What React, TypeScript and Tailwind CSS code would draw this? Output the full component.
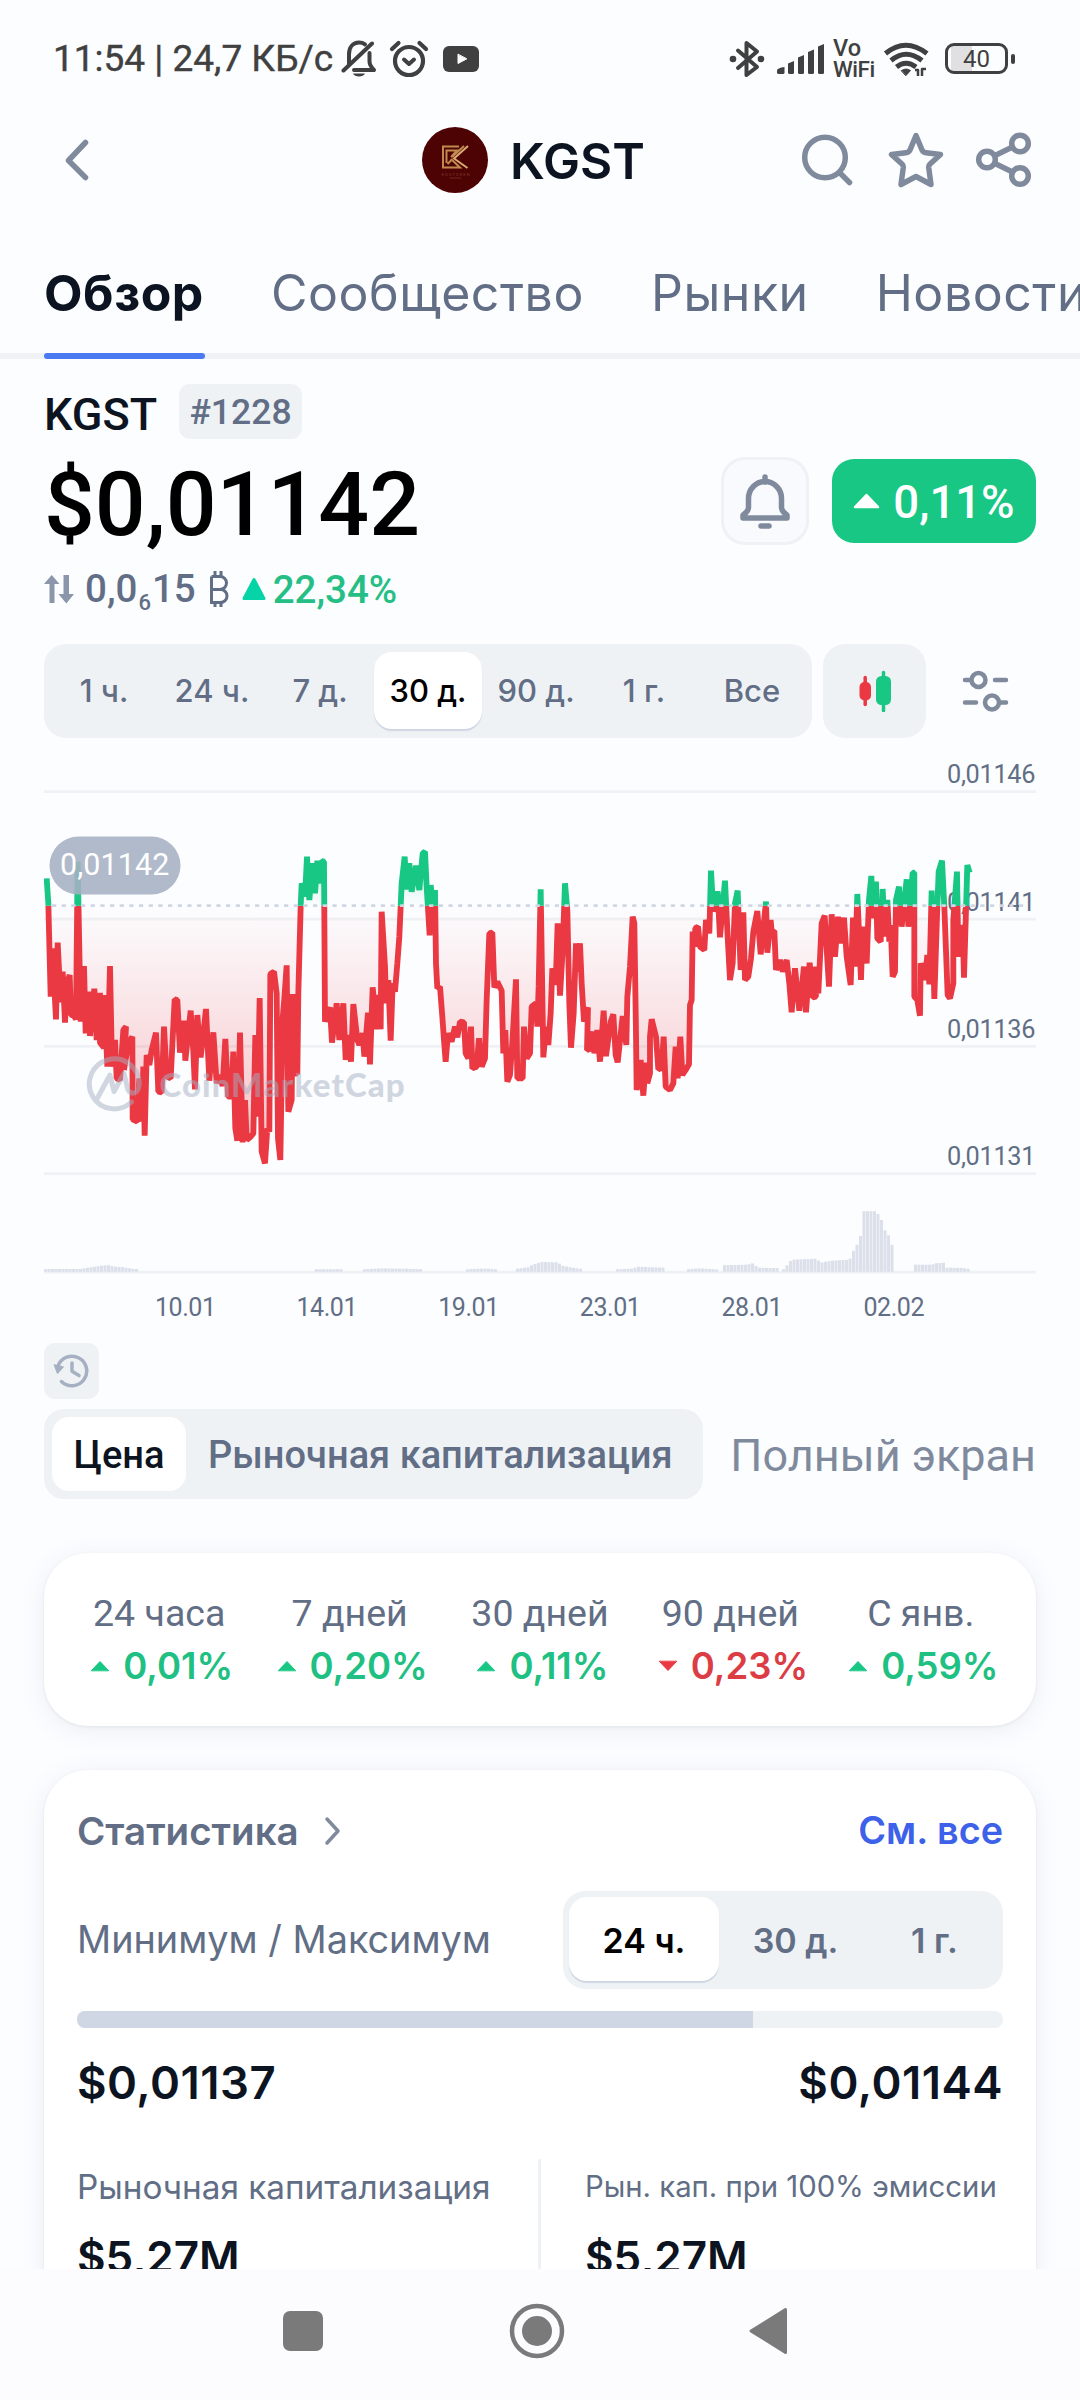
import type { ReactNode } from 'react'

const PERIODS = ['1 ч.', '24 ч.', '7 д.', '30 д.', '90 д.', '1 г.', 'Все']
const ACTIVE_PERIOD = '30 д.'

interface Change {
  readonly label: string
  readonly value: string
  readonly up: boolean
}

const CHANGES: readonly Change[] = [
  { label: '24 часа', value: '0,01%', up: true },
  { label: '7 дней', value: '0,20%', up: true },
  { label: '30 дней', value: '0,11%', up: true },
  { label: '90 дней', value: '0,23%', up: false },
  { label: 'С янв.', value: '0,59%', up: true },
]

const Y_LABELS = [
  { text: '0,01146', y: 783, line: 791.7 },
  { text: '0,01141', y: 911, line: 919 },
  { text: '0,01136', y: 1038, line: 1046.3 },
  { text: '0,01131', y: 1165, line: 1173.7 },
]

const X_LABELS = [
  { text: '10.01', x: 185.5 },
  { text: '14.01', x: 327 },
  { text: '19.01', x: 468.7 },
  { text: '23.01', x: 610.3 },
  { text: '28.01', x: 752 },
  { text: '02.02', x: 894 },
]

// Price series, in thirds of a pixel; y starts 750px from the top of the screen.
const PRICE_LINE =
  '140,385 145,460 152,740 157,595 168,808 173,578 182,757 188,665 195,818 201,700 209,675 213,795 222,797 228,808 233,335 242,815 ' +
  '252,648 257,850 265,725 270,858 283,716 290,870 300,728 300,878 312,893 313,735 322,950 330,648 336,950 345,870 350,985 360,990 ' +
  '370,840 378,830 372,960 385,880 397,860 398,1108 412,1115 418,985 425,1115 430,950 434,1157 440,915 448,945 455,900 468,848 475,1025 ' +
  '485,1027 492,830 500,980 512,985 524,748 532,750 540,908 552,812 556,932 572,782 580,905 585,1018 592,795 602,922 608,870 618,777 ' +
  '628,992 640,847 650,1000 658,975 668,1008 676,867 684,1040 694,1040 700,905 706,1135 712,1172 720,848 728,1177 735,1050 740,1170 ' +
  '752,1160 760,1150 766,855 772,1100 779,744 785,1205 795,1240 802,1135 808,1145 811,672 822,665 830,730 834,1165 841,1230 848,805 ' +
  '852,760 860,646 865,1085 875,1050 878,732 885,970 892,972 895,730 902,470 905,400 915,440 921,320 928,450 937,340 945,430 952,332 ' +
  '960,400 965,333 972,335 975,815 990,772 996,878 1010,760 1018,870 1030,760 1037,930 1045,855 1053,935 1060,762 1072,870 1078,885 ' +
  '1088,850 1093,920 1104,788 1110,943 1118,712 1130,838 1135,735 1142,838 1145,485 1155,650 1158,760 1165,690 1172,872 1178,700 ' +
  '1185,725 1192,640 1198,560 1202,470 1205,400 1214,320 1220,418 1228,340 1235,425 1248,347 1258,420 1268,310 1275,305 1280,410 ' +
  '1289,556 1292,405 1300,470 1305,420 1308,640 1312,715 1320,710 1327,800 1332,870 1337,935 1344,850 1355,875 1365,830 1372,862 ' +
  '1380,815 1392,817 1397,910 1405,925 1413,830 1417,955 1430,950 1437,865 1445,950 1455,925 1460,750 1468,550 1477,548 1483,712 ' +
  '1492,695 1505,722 1510,910 1516,840 1522,995 1530,975 1537,880 1548,688 1552,985 1568,985 1572,830 1580,925 1590,910 1595,770 ' +
  '1608,760 1612,830 1616,710 1622,418 1630,922 1638,830 1645,885 1652,790 1657,655 1667,705 1673,520 1680,737 1688,600 1695,400 ' +
  '1702,480 1708,760 1713,893 1721,790 1728,580 1733,665 1740,580 1745,700 1752,815 1764,772 1761,900 1770,897 1780,845 1783,910 ' +
  '1792,840 1800,935 1811,782 1818,918 1832,815 1840,793 1847,915 1853,937 1868,798 1879,885 1882,740 1890,650 1898,500 1903,520 ' +
  '1908,850 1910,1020 1922,930 1930,1037 1937,938 1942,1000 1950,970 1950,860 1955,808 1968,860 1975,958 1985,955 1991,860 1997,1010 ' +
  '2010,1020 2020,1000 2027,890 2033,985 2041,860 2047,975 2057,960 2067,943 2070,765 2075,750 2078,545 2083,590 2086,535 2094,530 ' +
  '2100,590 2113,600 2118,510 2128,550 2133,362 2140,485 2153,424 2160,562 2175,392 2183,560 2190,690 2198,640 2205,460 2213,422 ' +
  '2222,660 2230,487 2235,690 2245,680 2253,625 2260,545 2272,483 2282,613 2298,455 2302,608 2312,510 2315,545 2323,543 2328,660 ' +
  '2340,630 2348,665 2360,630 2368,700 2375,787 2385,655 2398,782 2412,650 2418,787 2429,638 2438,742 2448,740 2444,650 2455,730 ' +
  '2465,520 2474,497 2487,710 2495,493 2505,620 2514,500 2520,580 2532,503 2540,620 2552,705 2559,503 2565,650 2572,432 2583,690 ' +
  '2588,530 2600,640 2607,450 2614,378 2620,505 2628,395 2632,565 2642,575 2648,417 2655,560 2662,450 2668,575 2672,525 2678,680 ' +
  '2685,665 2688,450 2697,410 2705,530 2720,388 2725,530 2738,368 2743,368 2743,740 2752,750 2760,797 2762,640 2775,690 2782,615 ' +
  '2788,703 2795,422 2803,747 2812,470 2816,365 2826,332 2833,470 2843,735 2850,745 2860,700 2860,510 2871,365 2875,620 2888,525 ' +
  '2892,683 2902,345 2909,368'

// Volume profile: [x, height] runs in px, interpolated between neighbours.
const VOLUME: readonly (readonly (readonly [number, number])[])[] = [
  [[44, 2.7], [78, 2.7], [90, 4.5], [100, 6], [107, 6.5], [113, 5], [122, 4.5], [130, 3], [138, 2.5]],
  [[315, 2.5], [342, 2.5]],
  [[363, 2.5], [380, 3.3], [400, 3], [422, 2.5]],
  [[466, 2.5], [483, 3.2], [496, 2.3]],
  [[516, 3], [527, 4.5], [531, 7], [541, 10], [548, 9.5], [556, 9.5], [561, 6], [571, 4], [581, 2.7]],
  [[616, 2.5], [630, 3], [637, 5], [648, 4.5], [663, 4]],
  [[687, 2.5], [697, 3.3], [712, 2.5], [717, 2]],
  [[723, 6.5], [745, 7], [752, 8.5], [756, 4], [779, 3.5]],
  [[782, 2.5], [786, 7], [790, 12], [815, 13], [819, 9], [830, 11], [848, 12], [853, 23], [858, 31], [861, 45], [862, 60.5], [874, 60.5], [879, 55], [883, 42], [888, 35], [892, 22]],
  [[914, 7], [930, 7], [935, 8.5], [943, 9], [945, 4], [960, 3.8], [969, 2.5]],
]

function volumeBars(): { x: number; h: number }[] {
  const bars: { x: number; h: number }[] = []
  for (const run of VOLUME) {
    const end = run[run.length - 1][0]
    for (let x = run[0][0]; x < end; x += 3.5) {
      const i = Math.max(0, run.findIndex((p) => p[0] > x) - 1)
      const [x0, h0] = run[i]
      const [x1, h1] = run[i + 1]
      bars.push({ x, h: h0 + ((h1 - h0) * (x - x0)) / (x1 - x0) })
    }
  }
  return bars
}

interface SvgProps {
  readonly w: number
  readonly h: number
  readonly className?: string
  readonly children: ReactNode
}

function Svg({ w, h, className, children }: SvgProps) {
  return (
    <svg
      width={w}
      height={h}
      viewBox={`0 0 ${w} ${h}`}
      fill="none"
      strokeLinecap="round"
      strokeLinejoin="round"
      className={`block shrink-0 ${className ?? ''}`}
      aria-hidden="true"
    >
      {children}
    </svg>
  )
}

function StatusBar() {
  return (
    <div className="flex h-[117px] shrink-0 items-center pr-[65px] pl-[53px] text-[#404040]">
      <span className="w-[288px] font-[Roboto] text-[37px] leading-none whitespace-nowrap [-webkit-text-stroke:0.4px_#404040]">
        11:54 | 24,7 КБ/с
      </span>
      <Svg w={36} h={38}>
        <g stroke="#404040" strokeWidth="4">
          <path d="M8 24V14.5C8 7 12 2.5 18 2.5c2.5 0 4.5.7 6 1.8" />
          <path d="M2.5 30.500 31 3.5" />
          <path d="M28.5 13v8.500c0 4 2 6 4.500 8.500H13" />
        </g>
        <path d="M12 33.500h12c-1.500 4-10.500 4-12 0z" fill="#404040" />
      </Svg>
      <Svg w={40} h={38} className="ml-[12px]">
        <g stroke="#404040">
          <circle cx="20" cy="21" r="14" strokeWidth="4.2" />
          <path d="M15 19.500l5 4.500 5-4.500" strokeWidth="4" />
          <path d="M3 9 9.500 3M37 9 30.500 3" strokeWidth="4.2" />
        </g>
      </Svg>
      <Svg w={38} h={28} className="ml-[13px]">
        <rect x="1" y="1" width="36" height="26" rx="6" fill="#404040" />
        <path d="M16 9.500v9l8.500-4.500z" fill="#fcfdff" stroke="#fcfdff" />
      </Svg>

      <div className="ml-auto flex items-center">
        <Svg w={36} h={40}>
          <path d="M9 11.500 28 28 17.500 36V4L28 12.500 9 29" stroke="#404040" strokeWidth="4" />
          <circle cx="4" cy="20" r="3.3" fill="#404040" />
          <circle cx="32" cy="20" r="3.3" fill="#404040" />
        </Svg>
        <Svg w={48} h={32} className="ml-[12px]">
          <g fill="#404040">
            <path d="M0 27.500Q0 25 7.500 24v5.500q0 1.500-1.500 1.500h-4Q0 31 0 29.500z" />
            <path d="M11 20.500l6-2.500v11.500q0 1.500-1.500 1.500h-3q-1.500 0-1.500-1.500z" />
            <path d="M21 14.500l6-2.500v17.500q0 1.500-1.500 1.500h-3q-1.500 0-1.500-1.500z" />
            <path d="M31 9l6-2.500v23q0 1.500-1.500 1.500h-3q-1.500 0-1.500-1.500z" />
            <path d="M41 3.500 47 1v28.500q0 1.500-1.500 1.500h-3q-1.500 0-1.500-1.500z" />
          </g>
        </Svg>
        <div className="ml-[8px] flex w-[46px] flex-col font-[Roboto] text-[23.5px] leading-[21px] font-medium">
          <span>Vo</span>
          <span className="text-[22.5px] tracking-[-0.5px]">WiFi</span>
        </div>
        <Svg w={48} h={36} className="ml-[4px]">
          <g stroke="#404040" strokeWidth="5" strokeLinecap="butt">
            <path d="M2.5 12.500q20-16.500 41.500 0" />
            <path d="M8 19.500q15-12.500 31 0" />
            <path d="M13.500 26q9.500-7.500 19.500 0" />
          </g>
          <path d="M18.500 29.500q4.500-3 9 0l-4.500 5z" fill="#404040" stroke="#404040" />
          <path d="M32 29h3v6M39 35v-7h4" stroke="#404040" strokeWidth="2.5" strokeLinecap="butt" />
        </Svg>
        <div className="ml-[14px] flex h-[31px] w-[63px] items-center justify-center rounded-[9px] border-[3px] border-[#404040] bg-[linear-gradient(90deg,transparent_3px,#e0e0e2_3px,#e0e0e2_24px,transparent_24px)] pt-px font-[Roboto] text-[24px] leading-none">
          40
        </div>
        <div className="ml-[3px] h-[10px] w-[4px] rounded-full bg-[#404040]" />
      </div>
    </div>
  )
}

function TokenLogo() {
  return (
    <Svg w={66} h={66}>
      <circle cx="33" cy="33" r="33" fill="#4d0203" />
      <g stroke="#c08a4e" strokeWidth="2" strokeLinecap="butt" strokeLinejoin="miter">
        <path d="M37 19.500H21V40.500H38L29 32" />
        <path d="M24.500 36V23.500H35L29 30M25.500 37l4-4" />
        <path d="M46 19 32 31.500 45.500 41" stroke="#d8ab74" />
        <path d="M42 19 30 30" />
      </g>
      <text
        x="33.5"
        y="48.5"
        textAnchor="middle"
        fontFamily="Roboto, sans-serif"
        fontSize="4"
        textLength="28"
        fill="#7d3a2c"
      >
        KGSTOKEN
      </text>
      <path d="M28 51h11" stroke="#6b2a20" />
    </Svg>
  )
}

function Header() {
  return (
    <header className="flex h-[86px] shrink-0 items-center pl-[64px]">
      <Svg w={26} h={42} className="mr-[332px]">
        <path d="M21.500 3.500 4.500 21.500 21.500 38.500" stroke="#808a9d" strokeWidth="5.5" />
      </Svg>
      <TokenLogo />
      <h1 className="mt-[3px] ml-[22px] w-[291px] text-[49.5px] leading-none font-semibold text-[#0d1421]">
        KGST
      </h1>
      <Svg w={52} h={52}>
        <g stroke="#808a9d" strokeWidth="5.5">
          <circle cx="24" cy="23.5" r="20.3" />
          <path d="M39 39l9.500 9.500" />
        </g>
      </Svg>
      <Svg w={56} h={58} className="ml-[35px]">
        <path
          d="M28 4.500 34 19q1.300 2.500 4 2.700l14.500 1.800L42 33q-1.500 1.500-1.300 3.500L43 53.500 28 45.500 13 53.500 15.300 36.500q.2-2-1.300-3.500L3.500 23.500 18 21.700q2.700-.2 4-2.700z"
          stroke="#808a9d"
          strokeWidth="5.5"
        />
      </Svg>
      <Svg w={58} h={58} className="ml-[30px]">
        <g stroke="#808a9d" strokeWidth="5.5">
          <circle cx="13" cy="28.5" r="8.3" />
          <circle cx="46" cy="12.5" r="8.3" />
          <circle cx="46" cy="45" r="8.3" />
          <path d="M21 24.500 38.500 16M21 32.500 38.500 41" />
        </g>
      </Svg>
    </header>
  )
}

function Tabs() {
  return (
    <div className="flex shrink-0 flex-col">
      <nav className="flex h-[150px] gap-[67px] overflow-hidden pt-[60px] pl-[44px] text-[50px] leading-[60px] tracking-[0.55px] whitespace-nowrap text-[#616e85]">
        <span className="font-bold text-[#0d1421]">Обзор</span>
        <span>Сообщество</span>
        <span>Рынки</span>
        <span>Новости</span>
      </nav>
      <div className="h-[6px] bg-[#eff2f5] pl-[44px]">
        <div className="h-full w-[161px] rounded-full bg-[#4a7af2]" />
      </div>
    </div>
  )
}

function PriceSummary() {
  return (
    <section className="flex flex-col px-[44px] pt-[25px] font-[Roboto]">
      <div className="flex h-[55px] items-center">
        <span className="mt-[5px] w-[135px] text-[45px] leading-none font-medium text-[#0d1421]">KGST</span>
        <span className="flex h-[55px] w-[123px] items-center justify-center rounded-[11px] bg-[#eff2f5] pt-[2px] text-[35.5px] leading-none font-medium text-[#616e85]">
          #1228
        </span>
      </div>
      <div className="mt-[18px] flex h-[88px] items-center">
        <span className="mt-[8px] text-[89.5px] leading-none font-medium text-black">$0,01142</span>
        <button
          type="button"
          aria-label="Уведомления"
          className="ml-auto flex size-[88px] items-center justify-center rounded-[24px] border-[3px] border-[#eff2f5] bg-[#f9fafe]"
        >
          <Svg w={88} h={88}>
            <g stroke="#808a9d" strokeWidth="5.5">
              <path d="M44 20v5" />
              <path d="M27.500 50.500V41.500a16.500 17 0 0 1 33 0V50.500q.5 4.500 5.500 7.500v3H22V58q5-3 5.500-7.500z" />
              <path d="M40 69h8" />
            </g>
          </Svg>
        </button>
        <span className="ml-[23px] flex h-[84px] w-[204px] items-center justify-center gap-[13px] rounded-[22px] bg-[#18c784] text-[45.5px] leading-none font-medium text-white">
          <Svg w={27} h={18}>
            <path d="M2 15 13.500 3 25 15z" fill="#fff" stroke="#fff" strokeWidth="2.5" />
          </Svg>
          <span className="mt-[3px]">0,11%</span>
        </span>
      </div>
      <div className="mt-[22px] flex h-[43px] items-center text-[38.5px] leading-none font-medium text-[#616e85]">
        <Svg w={32} h={30}>
          <path
            d="M5.500 29V10H0L7.700 1 15.500 10H10.500V29zM19.500 1v19H14.500L22.300 29.500 30 20H25V1z"
            fill="#8c96ab"
          />
        </Svg>
        <span className="mt-[2px] ml-[9px]">0,0</span>
        <span className="mt-[28px] ml-px text-[22px]">6</span>
        <span className="mt-[2px] ml-px">15</span>
        <Svg w={22} h={36} className="ml-[12px]">
          <g stroke="#616e85" strokeWidth="3" strokeLinecap="butt" strokeLinejoin="miter">
            <path d="M3.500 5.500V31.500H12.500a6.500 6.500 0 0 0 0-13H3.500M12 18.500a6.500 6.500 0 0 0 0-13H3.500" />
            <path d="M7 0v6M13 0v6M7 31v5M13 31v5" />
          </g>
        </Svg>
        <Svg w={24} h={26} className="ml-[12px]">
          <path d="M2 22.500 12 3.500 22 22.500z" fill="#05d4a6" stroke="#05d4a6" strokeWidth="3" />
        </Svg>
        <span className="mt-[3px] ml-[7px] text-[#25bf85]">22,34%</span>
      </div>
    </section>
  )
}

function PeriodPicker() {
  return (
    <div className="mt-[34px] flex h-[94px] shrink-0 pl-[44px]">
      <div className="flex w-[768px] items-center rounded-[22px] bg-[#eff2f5] px-[6px] text-[31px] font-medium [word-spacing:1px] text-[#616e85]">
        {PERIODS.map((period) => (
          <button
            key={period}
            type="button"
            className={
              period === ACTIVE_PERIOD
                ? 'mb-px h-[77px] w-[108px] rounded-[18px] bg-white pt-[2px] text-black shadow-[0_2px_1px_#cfd6e4]'
                : 'h-[77px] w-[108px] pt-px'
            }
          >
            {period}
          </button>
        ))}
      </div>
      <button
        type="button"
        aria-label="Свечи"
        className="ml-[11px] flex w-[103px] items-center justify-center rounded-[22px] bg-[#eff2f5]"
      >
        <Svg w={34} h={42}>
          <rect x="1.5" y="12" width="11.5" height="18.5" rx="5" fill="#ea3943" />
          <path d="M7.200 7.500v27" stroke="#ea3943" strokeWidth="3.5" />
          <rect x="18" y="6" width="15" height="29" rx="5.5" fill="#18c784" />
          <path d="M25.500 2.500v38" stroke="#18c784" strokeWidth="3.5" />
        </Svg>
      </button>
      <button type="button" aria-label="Настройки" className="ml-[35px] flex items-center">
        <Svg w={50} h={44}>
          <g stroke="#808a9d" strokeWidth="4.5">
            <circle cx="17.5" cy="11" r="7" />
            <circle cx="31" cy="33.5" r="7" />
            <path d="M4 11h5M34 11h11M4 33.500h11M40 33.500h5" />
          </g>
        </Svg>
      </button>
    </div>
  )
}

function PriceChart() {
  return (
    <svg
      width="1080"
      height="592"
      viewBox="0 738 1080 592"
      className="block shrink-0 font-[Roboto]"
      role="img"
      aria-label="График цены"
    >
      <defs>
        <clipPath id="above">
          <rect x="132" y="0" width="3108" height="467" />
        </clipPath>
        <clipPath id="below">
          <rect x="132" y="467" width="3108" height="900" />
        </clipPath>
        <linearGradient id="loss" gradientUnits="userSpaceOnUse" x1="0" y1="467" x2="0" y2="1240">
          <stop offset="0" stopColor="#ea3943" stopOpacity="0" />
          <stop offset="1" stopColor="#ea3943" stopOpacity="0.32" />
        </linearGradient>
        <linearGradient id="gain" gradientUnits="userSpaceOnUse" x1="0" y1="305" x2="0" y2="467">
          <stop offset="0" stopColor="#16c784" stopOpacity="0.3" />
          <stop offset="1" stopColor="#16c784" stopOpacity="0" />
        </linearGradient>
      </defs>

      {Y_LABELS.map((tick) => (
        <g key={tick.text}>
          <path d={`M44 ${tick.line}H1036`} stroke="#eff1f4" strokeWidth="2.75" />
          <text x="947" y={tick.y} textLength="88.5" fontSize="25.3" fill="#616e85">
            {tick.text}
          </text>
        </g>
      ))}

      <g transform="translate(0 750) scale(0.33333)">
        <g clipPath="url(#below)">
          <polygon points={`140,467 ${PRICE_LINE} 2909,467`} fill="url(#loss)" />
          <polyline points={PRICE_LINE} fill="none" stroke="#ea3943" strokeWidth="17.5" strokeLinejoin="bevel" />
        </g>
        <g clipPath="url(#above)">
          <polygon points={`140,467 ${PRICE_LINE} 2909,467`} fill="url(#gain)" />
          <polyline points={PRICE_LINE} fill="none" stroke="#18c784" strokeWidth="17.5" strokeLinejoin="bevel" />
        </g>
      </g>
      <path d="M52 905.6H1028" stroke="#cfd6e4" strokeWidth="2.75" strokeDasharray="4.2 5.47" />

      {/* Watermark */}
      <g opacity="0.5">
        <path
          d="M131.500 1102A25 25 0 1 1 139.300 1083C139.300 1096 127.500 1096 127 1086L124 1073.500 114 1091.500 110 1075 97.300 1098.300"
          fill="none"
          stroke="#a6b0c3"
          strokeWidth="5"
          strokeLinecap="round"
          strokeLinejoin="round"
        />
        <text
          x="159.5"
          y="1096.7"
          textLength="245"
          fontFamily="Lato, sans-serif"
          fontWeight="900"
          fontSize="33"
          fill="#a6b0c3"
        >
          CoinMarketCap
        </text>
      </g>

      <rect x="49.5" y="836.5" width="131" height="58" rx="29" fill="#a6b0c3" fillOpacity="0.88" />
      <text x="60" y="875" textLength="109.5" fontSize="30.5" fill="#fff">
        0,01142
      </text>

      <path d="M44 1272H1036" stroke="#eff2f5" strokeWidth="2.75" />
      {volumeBars().map((bar) => (
        <rect key={bar.x} x={bar.x} y={1271.7 - bar.h} width="3" height={bar.h} fill="#dbe0ea" />
      ))}

      {X_LABELS.map((tick) => (
        <text
          key={tick.text}
          x={tick.x}
          y="1316"
          textAnchor="middle"
          textLength="61"
          fontSize="25"
          fill="#616e85"
        >
          {tick.text}
        </text>
      ))}
    </svg>
  )
}

function ChartFooter() {
  return (
    <div className="flex flex-col px-[44px] pt-[13px] font-[Roboto]">
      <button
        type="button"
        aria-label="История"
        className="flex h-[56px] w-[55px] items-center justify-center rounded-[11px] bg-[#eff2f5]"
      >
        <Svg w={38} h={36}>
          <path d="M8.500 28.500A14.800 14.800 0 1 0 5 13" stroke="#a6b0c3" strokeWidth="3.5" />
          <path d="M1.500 12l8.500 2-5.500 6z" fill="#a6b0c3" stroke="#a6b0c3" strokeWidth="1.5" />
          <path d="M19 10v8.300l7 4.300" stroke="#a6b0c3" strokeWidth="3.5" />
        </Svg>
      </button>
      <div className="mt-[10px] flex h-[90px] items-center justify-between">
        <div className="flex h-[90px] w-[659px] items-center rounded-[20px] bg-[#eff2f5] px-[8px] text-[38px] leading-none font-medium whitespace-nowrap">
          <span className="flex h-[74px] w-[134px] items-center justify-center rounded-[17px] bg-white pt-[2px] text-[#0d1421]">
            Цена
          </span>
          <span className="ml-[22px] pt-[2px] text-[#616e85]">Рыночная капитализация</span>
        </div>
        <span className="pt-[2px] text-[45px] leading-none whitespace-nowrap text-[#808a9d]">Полный экран</span>
      </div>
    </div>
  )
}

function ChangesCard() {
  return (
    <section className="mx-[44px] mt-[54px] grid h-[173px] shrink-0 grid-cols-5 content-center rounded-[44px] bg-white px-[20px] shadow-[0_4px_24px_rgba(88,102,126,0.1),0_1px_3px_rgba(88,102,126,0.1)]">
      {CHANGES.map((change) => (
        <div key={change.label} className="flex flex-col items-center whitespace-nowrap">
          <span className="font-[Roboto] text-[37.5px] leading-[53px] text-[#616e85]">{change.label}</span>
          <span
            className={
              change.up
                ? 'ml-[5px] flex items-center gap-[13px] text-[36.5px] leading-[53px] font-semibold text-[#20c083]'
                : 'ml-[5px] flex items-center gap-[13px] text-[36.5px] leading-[53px] font-semibold text-[#dc3d45]'
            }
          >
            <Svg w={20} h={12}>
              <path
                d={change.up ? 'M1.500 10.500 10 1.500 18.500 10.500z' : 'M1.500 1.500 10 10.500 18.500 1.500z'}
                fill={change.up ? '#18c784' : '#ea3943'}
                stroke={change.up ? '#18c784' : '#ea3943'}
              />
            </Svg>
            {change.value}
          </span>
        </div>
      ))}
    </section>
  )
}

function StatisticsCard() {
  return (
    <section className="mx-[44px] mt-[44px] flex h-[600px] shrink-0 flex-col rounded-t-[44px] bg-white px-[33px] pt-[31px] shadow-[0_4px_24px_rgba(88,102,126,0.1),0_1px_3px_rgba(88,102,126,0.1)]">
      <div className="flex h-[60px] items-center text-[38.5px] leading-none font-semibold">
        <h2 className="w-[247px] text-[#616e85]">Статистика</h2>
        <Svg w={18} h={30}>
          <path d="M3 3 14 15 3 27" stroke="#808a9d" strokeWidth="3.5" />
        </Svg>
        <a className="ml-auto text-[37.8px] text-[#3d61e8]">См. все</a>
      </div>
      <div className="mt-[30px] flex h-[98px] items-center justify-between">
        <span className="text-[37.8px] leading-none whitespace-nowrap text-[#616e85]">
          Минимум / Максимум
        </span>
        <div className="flex h-[98px] w-[440px] rounded-[22px] bg-[#eff2f5] p-[6px] text-[34px] font-semibold [word-spacing:1px] text-[#616e85]">
          <button
            type="button"
            className="h-[84px] w-[150px] rounded-[18px] bg-white pt-[2px] text-black shadow-[0_2px_1px_#cfd6e4]"
          >
            24 ч.
          </button>
          <button type="button" className="h-[86px] w-[153px]">
            30 д.
          </button>
          <button type="button" className="h-[86px] flex-1">
            1 г.
          </button>
        </div>
      </div>
      <div className="mt-[22px] h-[17px] overflow-hidden rounded-[8px] bg-[#eff2f5]">
        <div className="h-full w-[73%] bg-[#cfd6e4]" />
      </div>
      <div className="mt-[25px] flex h-[60px] items-center justify-between text-[45.5px] leading-none font-semibold tracking-[0.5px] text-[#0d1421]">
        <span>$0,01137</span>
        <span>$0,01144</span>
      </div>
      <div className="mt-[46px] flex flex-1 whitespace-nowrap">
        <div className="flex w-[464px] flex-col border-r-[3px] border-[#eff2f5]">
          <span className="mt-[8px] text-[33.3px] leading-[40px] text-[#616e85]">Рыночная капитализация</span>
          <span className="mt-[20px] text-[44px] leading-[60px] font-semibold text-[#0d1421]">$5,27M</span>
        </div>
        <div className="flex flex-col pl-[44px]">
          <span className="mt-[8px] text-[29.3px] leading-[40px] text-[#616e85]">
            Рын. кап. при 100% эмиссии
          </span>
          <span className="mt-[20px] text-[44px] leading-[60px] font-semibold text-[#0d1421]">$5,27M</span>
        </div>
      </div>
    </section>
  )
}

function NavigationBar() {
  return (
    <div className="flex h-[131px] shrink-0 items-center bg-[#fcfcfe] pb-[7px] pl-[282px]">
      <Svg w={42} h={42}>
        <rect x="1" y="1" width="40" height="40" rx="7" fill="#7a7a7a" />
      </Svg>
      <Svg w={56} h={56} className="ml-[185px]">
        <circle cx="28" cy="28" r="25" stroke="#7a7a7a" strokeWidth="4.5" />
        <circle cx="28" cy="28" r="15" fill="#7a7a7a" />
      </Svg>
      <Svg w={42} h={50} className="ml-[182px]">
        <path d="M4 25 38.500 3.500v43z" fill="#7a7a7a" stroke="#7a7a7a" strokeWidth="3" />
      </Svg>
    </div>
  )
}

export default function App() {
  return (
    <main className="flex h-[2400px] w-[1080px] flex-col overflow-hidden bg-[#fcfdff] font-[Inter]">
      <div className="flex h-[2269px] shrink-0 flex-col overflow-hidden">
        <StatusBar />
        <Header />
        <Tabs />
        <PriceSummary />
        <PeriodPicker />
        <PriceChart />
        <ChartFooter />
        <ChangesCard />
        <StatisticsCard />
      </div>
      <NavigationBar />
    </main>
  )
}
